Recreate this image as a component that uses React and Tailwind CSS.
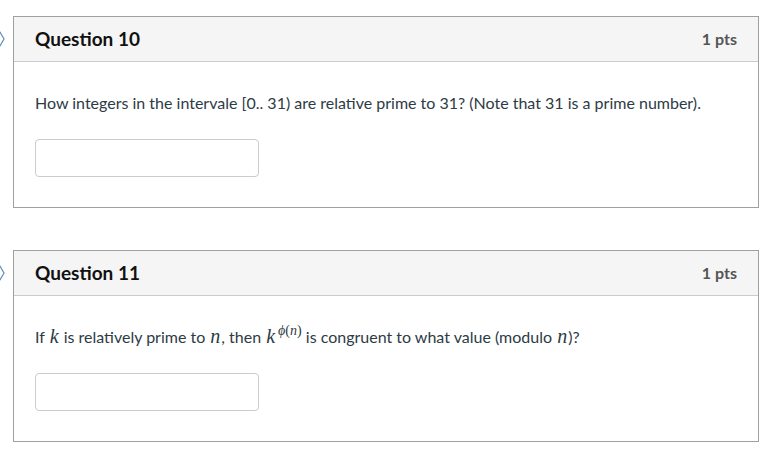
import React from "react";

function Marker() {
  return (
    <svg className="absolute left-[-8px] top-[15px]" width="14" height="16" viewBox="0 0 14 16">
      <path d="M1 1 L8 1 L12 8 L8 15 L1 15" fill="none" stroke="#5b8db8" strokeWidth="1.2" />
    </svg>
  );
}

function Card({ title, children }) {
  return (
    <div className="relative">
      <Marker />
      <div className="ml-[13px] mr-[5px] border border-[#a0a0a0] bg-white">
        <div className="flex h-[45px] items-center justify-between border-b border-[#c7cdd1] bg-[#f5f5f5] pl-[21px] pr-[21px]">
          <span className="text-[19px] font-bold text-[#111]">{title}</span>
          <span className="text-[16px] font-bold text-[#555]">1 pts</span>
        </div>
        <div className="px-[21px] pt-[31px] pb-[30px]">
          {children}
          <div className="mt-[26px] h-[38px] w-[224px] rounded-[4px] border border-[#c7cdd1] bg-white"></div>
        </div>
      </div>
    </div>
  );
}

const serif = { fontFamily: '"Liberation Serif", "DejaVu Serif", serif' };

const M = ({ children }) => (
  <span className="italic text-[20px] leading-[0] mx-[1px]" style={serif}>{children}</span>
);

export default function App() {
  return (
    <div className="w-[764px] h-[466px] bg-white overflow-hidden pt-[16px]" style={{ fontFamily: 'Lato, "Noto Sans", sans-serif' }}>
      <Card title="Question 10">
        <p className="text-[16px] text-[#2d3b45] leading-[20px]">
          How integers in the intervale [0.. 31) are relative prime to 31? (Note that 31 is a prime number).
        </p>
      </Card>
      <div className="h-[42px]"></div>
      <Card title="Question 11">
        <p className="h-[20px] text-[16px] text-[#2d3b45] leading-[20px]">
          If <M>k</M> is relatively prime to <M>n</M>, then <M>k</M>
          <span className="relative top-[-8px] ml-[2px] text-[14px] italic leading-[0]" style={serif}>
            ϕ<span className="not-italic">(</span>n<span className="not-italic">)</span>
          </span>{" "}
          is congruent to what value (modulo <M>n</M>)?
        </p>
      </Card>
    </div>
  );
}
